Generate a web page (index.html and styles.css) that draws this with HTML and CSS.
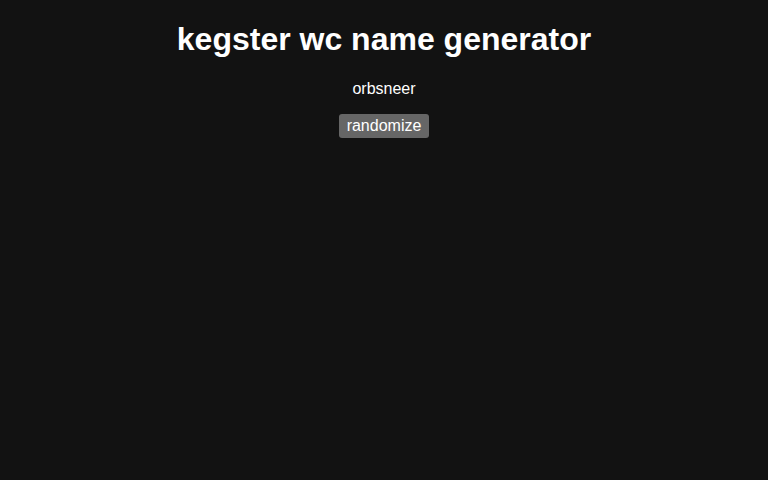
FILE: index.html
```html
<!DOCTYPE html>
<html lang="en">
<head>
    <meta charset="UTF-8">
    <meta name="viewport" content="width=device-width, initial-scale=1.0">
    <title>kegster wc name generator</title>
    <link rel="stylesheet" href="styles.css">
</head>
<body>
    <h1>kegster wc name generator</h1>
    <p class="name" id="name">orbsneer</p>
    <button class="randomize" id="randomize">randomize</button>
</body>
</html>
```

FILE: styles.css
```css
body {
    margin: 0;
    background: #121212;
    color: #fff;
    font-family: "Liberation Sans", Arial, sans-serif;
    text-align: center;
}

h1 {
    font-size: 2rem;
    margin: 0.67em 0;
}

.name {
    font-size: 1rem;
}

.randomize {
    background: #666;
    color: #fff;
    border: none;
    border-radius: 3px;
    padding: 3px 8px;
    font-family: inherit;
    font-size: 1rem;
    cursor: pointer;
}
```
